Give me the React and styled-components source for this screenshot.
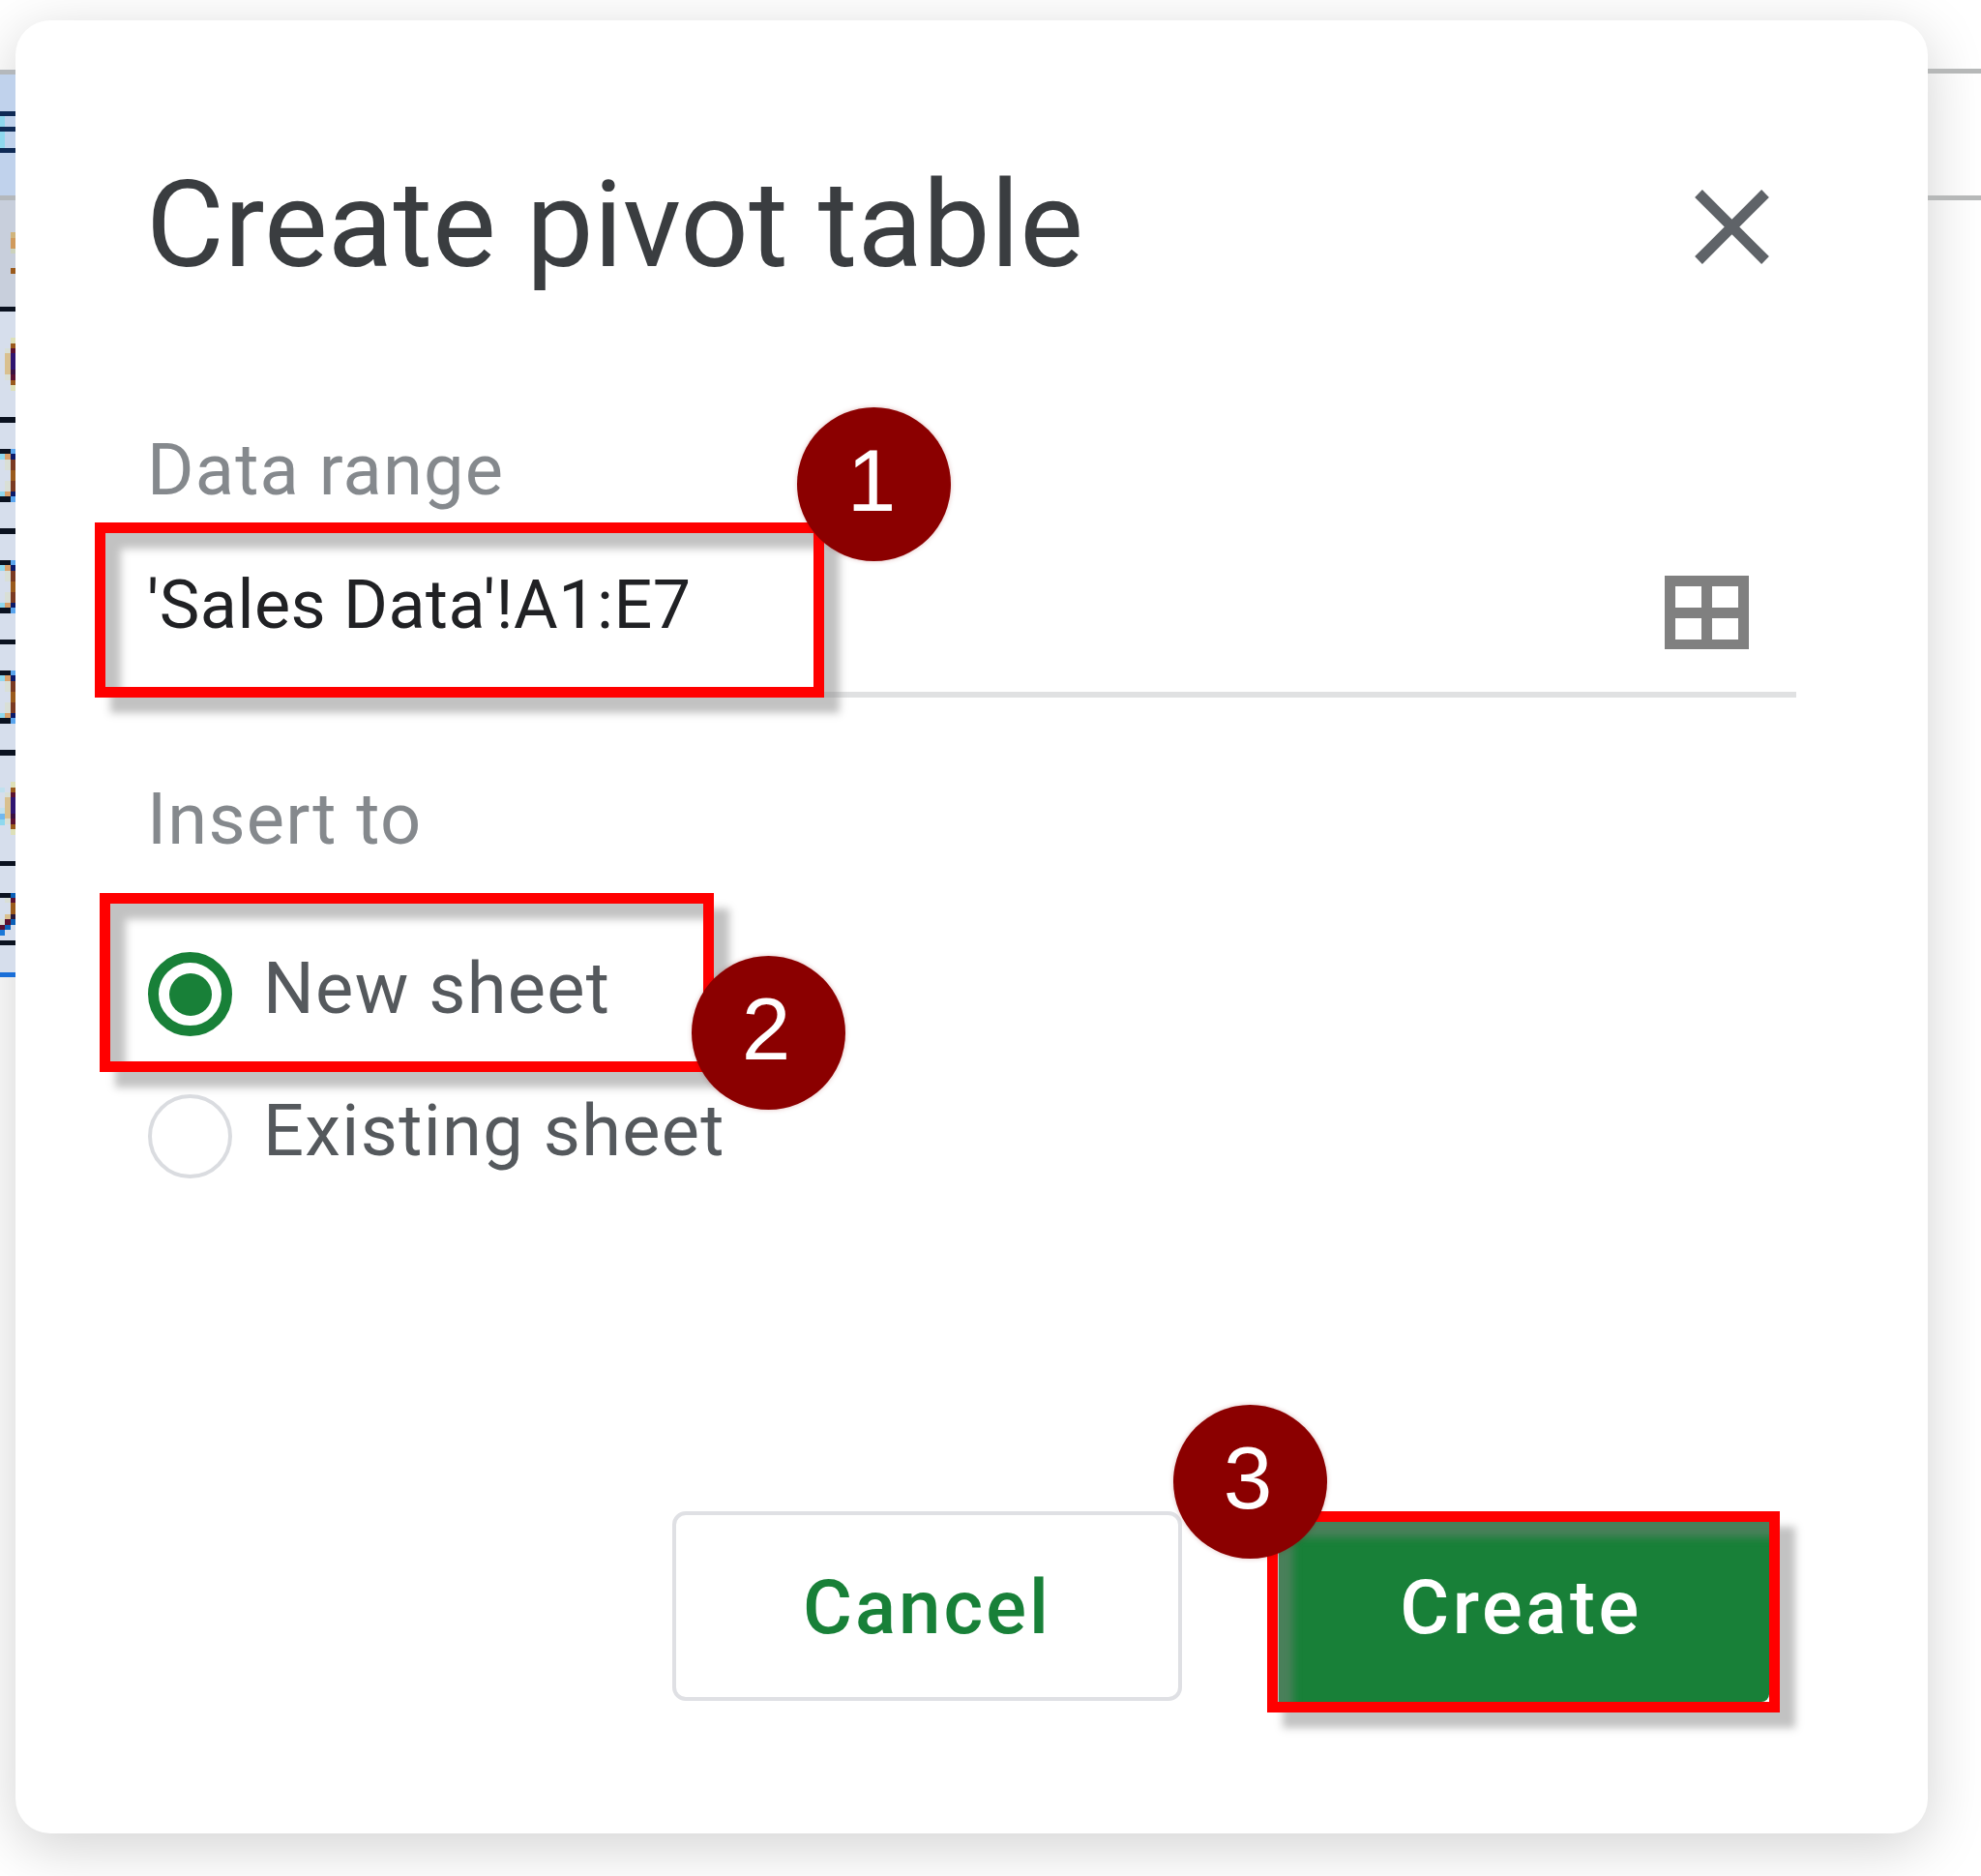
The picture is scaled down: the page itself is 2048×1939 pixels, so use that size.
import styled, { createGlobalStyle } from "styled-components";

const GlobalStyle = createGlobalStyle`
  html, body {
    margin: 0;
    background: #fff;
    font-family: Roboto, "Liberation Sans", sans-serif;
  }
`;

const Page = styled.div`
  display: grid;
  grid-template-columns: 16px 1977px 55px;
  width: 2048px;
  height: 1939px;
  overflow: hidden;
`;

const SheetSliver = styled.svg`
  display: block;
  position: relative;
  z-index: 2;
  margin-top: 72px;
  width: 16px;
  height: 938px;
`;

const SheetEdge = styled.div`
  display: flex;
  flex-direction: column;
  gap: 126px;
  padding-top: 71px;
  position: relative;
  z-index: 2;
`;

const EdgeRule = styled.div`
  height: 5px;
  background: #b6b8b8;
`;

const Dialog = styled.div`
  position: relative;
  z-index: 1;
  box-sizing: border-box;
  margin-top: 21px;
  height: 1874px;
  padding: 142px 136px 0 141px;
  background: #fff;
  border-radius: 36px;
  box-shadow: 0 14px 60px rgba(0, 0, 0, 0.18);
`;

const Header = styled.div`
  display: flex;
  justify-content: space-between;
  align-items: flex-start;
  height: 140px;
`;

const Title = styled.h1`
  margin: 0 0 0 -6px;
  font-size: 124px;
  line-height: 140px;
  font-weight: 400;
  letter-spacing: 0.15px;
  color: #3a3d40;
  white-space: nowrap;
`;

const CloseIcon = styled.svg`
  display: block;
  width: 77px;
  height: 77px;
  margin: 33px 28px 0 0;
`;

const SectionLabel = styled.div`
  margin: ${(p) => p.$top}px 0 0 -5px;
  font-size: 74px;
  line-height: 80px;
  letter-spacing: 1.2px;
  color: #85898d;
`;

const Field = styled.div`
  position: relative;
  box-sizing: border-box;
  display: flex;
  justify-content: space-between;
  align-items: flex-start;
  height: 181px;
  margin-top: 14px;
  padding: 45px 49px 0 0;
  border-bottom: 6px solid #e0e1e2;
`;

const FieldValue = styled.div`
  margin-left: -5px;
  font-size: 70px;
  line-height: 80px;
  letter-spacing: 0.5px;
  color: #202124;
  white-space: nowrap;
`;

const GridIcon = styled.svg`
  display: block;
  width: 87px;
  height: 76px;
  margin-top: 10px;
`;

const RadioGroup = styled.div`
  margin-top: 67px;
`;

const RadioRow = styled.div`
  position: relative;
  display: flex;
  align-items: center;
  gap: 32px;
  height: 147px;
  margin-left: -4px;
`;

const RadioMark = styled.div`
  box-sizing: border-box;
  display: flex;
  align-items: center;
  justify-content: center;
  width: 87px;
  height: 87px;
  border-radius: 50%;
  border: ${(p) => (p.$checked ? "11px solid #188038" : "4px solid #dadce0")};

  &::after {
    content: "";
    display: ${(p) => (p.$checked ? "block" : "none")};
    width: 44px;
    height: 44px;
    border-radius: 50%;
    background: #188038;
  }
`;

const RadioText = styled.span`
  padding-bottom: 12px;
  font-size: 74px;
  line-height: 80px;
  letter-spacing: 1.3px;
  color: #55595d;
`;

const Footer = styled.div`
  display: flex;
  justify-content: flex-end;
  align-items: flex-start;
  gap: 100px;
  margin-top: 314px;
  padding-right: 28px;
`;

const CancelButton = styled.button`
  box-sizing: border-box;
  width: 527px;
  height: 196px;
  padding: 2px 0 0;
  background: #fff;
  border: 4px solid #dfe0e4;
  border-radius: 14px;
  font-family: inherit;
  font-size: 78px;
  font-weight: 500;
  letter-spacing: 3px;
  color: #188038;
`;

const CreateButton = styled.button`
  position: relative;
  box-sizing: border-box;
  width: 507px;
  height: 186px;
  margin-top: 11px;
  padding: 0 6px 10px 0;
  background: #188038;
  border: 0;
  border-radius: 0 0 8px 0;
  font-family: inherit;
  font-size: 78px;
  font-weight: 500;
  letter-spacing: 3.5px;
  color: #fff;
`;

// red callout frame, its drop shadow falls inside and outside the stroke
const Highlight = styled.div`
  position: absolute;
  box-sizing: border-box;
  left: ${(p) => p.$left}px;
  top: ${(p) => p.$top}px;
  width: ${(p) => p.$width}px;
  height: ${(p) => p.$height}px;
  border: 11px solid #ff0000;
  pointer-events: none;
  box-shadow:
    16px 16px 8px rgba(128, 128, 128, 0.48),
    inset 16px 16px 8px rgba(128, 128, 128, 0.48);
`;

const Badge = styled.div`
  position: absolute;
  z-index: 3;
  box-sizing: border-box;
  left: ${(p) => p.$left}px;
  top: ${(p) => p.$top}px;
  display: flex;
  align-items: center;
  justify-content: center;
  width: 159px;
  height: 159px;
  padding: 0 5px 9px 0;
  border-radius: 50%;
  background: #8b0000;
  box-shadow: 0 0 5px rgba(139, 0, 0, 0.25);
  font-family: "Liberation Sans", Arial, sans-serif;
  font-size: 91px;
  font-weight: 400;
  letter-spacing: 0;
  line-height: 1;
  color: #fff;
`;

const dark = "#0b1220";
const sky = "#8fd8ee";
const pale = "#d9dfd6";
const tan = "#d9c08f";
const brown = "#9a5a1c";
const rust = "#7a3a22";
const plum = "#5a1030";
const violet = "#2f1570";
const peach = "#d9a06a";
const navy = "#0b1a6a";

const zeroGlyph = (y) => [
  [0, y, 11, 5, dark],
  [11, y, 5, 5, "#5aa5ee"],
  [0, y + 5, 5, 6, sky],
  [5, y + 5, 6, 6, peach],
  [11, y + 5, 5, 6, navy],
  [5, y + 11, 6, 11, pale],
  [11, y + 11, 5, 11, rust],
  [11, y + 22, 5, 11, brown],
  [11, y + 33, 5, 11, rust],
  [5, y + 33, 6, 11, pale],
  [0, y + 44, 5, 5, sky],
  [5, y + 44, 6, 5, peach],
  [11, y + 44, 5, 5, navy],
  [0, y + 49, 11, 6, dark],
  [11, y + 49, 5, 6, "#5aa5ee"],
];

const sixGlyph = (y) => [
  [11, y, 5, 6, "#dde0b8"],
  [11, y + 6, 5, 5, brown],
  [11, y + 11, 5, 5, plum],
  [5, y + 11, 6, 5, pale],
  [11, y + 16, 5, 17, violet],
  [5, y + 16, 6, 17, tan],
  [11, y + 33, 5, 5, "#3a1040"],
  [5, y + 33, 6, 5, tan],
  [11, y + 38, 5, 6, plum],
  [5, y + 38, 6, 6, pale],
  [11, y + 44, 5, 5, brown],
  [11, y + 49, 5, 6, "#dde0b8"],
];

const sheetCells = [
  [0, 72, 16, 5, "#b4b8bc"],
  [0, 77, 16, 125, "#c0d2ec"],
  [0, 115, 16, 5, "#0f2a55"],
  [0, 120, 5, 11, sky],
  [0, 131, 16, 5, "#0f2a55"],
  [0, 136, 5, 17, sky],
  [0, 153, 16, 5, "#0f2a55"],
  [0, 202, 16, 5, "#b4b8bc"],
  [0, 207, 16, 110, "#c8cfdc"],
  [11, 240, 5, 6, "#d0b47c"],
  [11, 246, 5, 11, "#d09a5c"],
  [11, 257, 5, 5, "#ccd2bc"],
  [11, 277, 5, 6, "#9a5a1c"],
  [0, 317, 16, 5, dark],
  [0, 322, 16, 683, "#d6deec"],
  ...sixGlyph(349),
  [0, 431, 16, 6, dark],
  ...zeroGlyph(464),
  [0, 546, 16, 6, dark],
  ...zeroGlyph(579),
  [0, 661, 16, 5, dark],
  ...zeroGlyph(693),
  [0, 775, 16, 6, dark],
  ...sixGlyph(808),
  [0, 814, 5, 5, "#c0e0ee"],
  [0, 835, 5, 6, "#c0e0ee"],
  [0, 841, 5, 6, "#70b8f0"],
  [0, 847, 5, 6, sky],
  [0, 890, 16, 5, dark],
  [0, 923, 11, 5, dark],
  [11, 923, 5, 5, "#0a60b8"],
  [5, 928, 6, 5, pale],
  [11, 928, 5, 5, plum],
  [11, 933, 5, 12, brown],
  [5, 945, 6, 5, tan],
  [11, 945, 5, 5, "#2a1838"],
  [0, 950, 5, 6, pale],
  [5, 950, 6, 6, plum],
  [11, 950, 5, 6, "#0a60b8"],
  [0, 956, 5, 5, plum],
  [5, 956, 6, 5, "#0a60b8"],
  [0, 961, 5, 6, "#1a78d8"],
  [0, 972, 16, 5, dark],
  [0, 1005, 16, 5, "#1a6fd8"],
];

function App() {
  return (
    <Page>
      <GlobalStyle />
      <SheetSliver viewBox="0 72 16 938" shapeRendering="crispEdges">
        {sheetCells.map(([x, y, w, h, fill], i) => (
          <rect key={i} x={x} y={y} width={w} height={h} fill={fill} />
        ))}
      </SheetSliver>

      <Dialog>
        <Header>
          <Title>Create pivot table</Title>
          <CloseIcon viewBox="0 0 77 77">
            <path d="M4 4L73 73M73 4L4 73" stroke="#5f6368" strokeWidth="11" fill="none" />
          </CloseIcon>
        </Header>

        <SectionLabel $top={143}>Data range</SectionLabel>
        <Field>
          <FieldValue>'Sales Data'!A1:E7</FieldValue>
          <GridIcon viewBox="0 0 87 76">
            <path
              fillRule="evenodd"
              fill="#808080"
              d="M0 0H87V76H0ZM11 11V33H38V11ZM49 11V33H76V11ZM11 44V66H38V44ZM49 44V66H76V44Z"
            />
          </GridIcon>
          <Highlight $left={-59} $top={0} $width={754} $height={181} />
          <Badge $left={667} $top={-119}>1</Badge>
        </Field>

        <SectionLabel $top={86}>Insert to</SectionLabel>
        <RadioGroup>
          <RadioRow>
            <RadioMark $checked />
            <RadioText>New sheet</RadioText>
            <Highlight $left={-50} $top={-31} $width={635} $height={185} />
            <Badge $left={562} $top={34}>2</Badge>
          </RadioRow>
          <RadioRow>
            <RadioMark />
            <RadioText>Existing sheet</RadioText>
          </RadioRow>
        </RadioGroup>

        <Footer>
          <CancelButton>Cancel</CancelButton>
          <CreateButton>
            Create
            <Highlight $left={-12} $top={-11} $width={530} $height={208} />
            <Badge $left={-109} $top={-121}>3</Badge>
          </CreateButton>
        </Footer>
      </Dialog>

      <SheetEdge>
        <EdgeRule />
        <EdgeRule />
      </SheetEdge>
    </Page>
  );
}

export default App;
